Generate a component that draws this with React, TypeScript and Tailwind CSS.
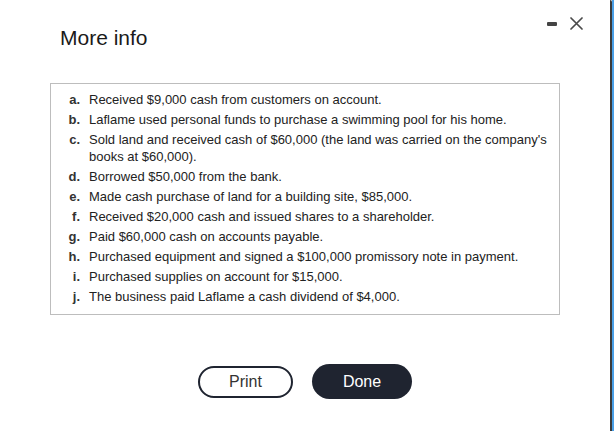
const items: { letter: string; text: string }[] = [
  { letter: "a.", text: "Received $9,000 cash from customers on account." },
  { letter: "b.", text: "Laflame used personal funds to purchase a swimming pool for his home." },
  { letter: "c.", text: "Sold land and received cash of $60,000 (the land was carried on the company's books at $60,000)." },
  { letter: "d.", text: "Borrowed $50,000 from the bank." },
  { letter: "e.", text: "Made cash purchase of land for a building site, $85,000." },
  { letter: "f.", text: "Received $20,000 cash and issued shares to a shareholder." },
  { letter: "g.", text: "Paid $60,000 cash on accounts payable." },
  { letter: "h.", text: "Purchased equipment and signed a $100,000 promissory note in payment." },
  { letter: "i.", text: "Purchased supplies on account for $15,000." },
  { letter: "j.", text: "The business paid Laflame a cash dividend of $4,000." },
];

export default function App() {
  return (
    <div
      className="w-[616px] h-[431px] bg-white flex overflow-hidden"
      style={{ fontFamily: "'Liberation Sans', Arial, sans-serif" }}
    >
      <div className="w-[610px] flex flex-col">
        <div className="flex h-[50px]">
          <h1 className="pl-[60px] pt-[26px] text-[21px] leading-[24px] text-[#1a1a1a] font-normal">More info</h1>
          <div className="ml-auto flex items-start pt-[17px] pr-[27px] gap-[13px]">
            <span className="mt-[5px] w-[10px] h-[3.5px] bg-[#444] rounded-[1px]" />
            {/* close glyph */}
            <svg width="13" height="13" viewBox="0 0 13 13" className="text-[#4a4a4a]">
              <path d="M1 1 L12 12 M12 1 L1 12" stroke="currentColor" strokeWidth="1.7" strokeLinecap="round" />
            </svg>
          </div>
        </div>

        <div className="ml-[50px] mt-[33px] w-[510px] border border-[#bdbdbd] pt-[7px] pb-[9px] pl-[5px] pr-[4px] flex flex-col gap-[3px]">
          {items.map((it) => (
            <div key={it.letter} className="flex text-[13px] leading-[17px]">
              <span className="w-[24px] shrink-0 text-right font-bold text-[#333]">{it.letter}</span>
              <span className="ml-[9px] text-[#222]">{it.text}</span>
            </div>
          ))}
        </div>

        <div className="mt-[49px] flex items-center justify-center gap-[19px]">
          <button className="w-[95px] h-[32px] rounded-full border-2 border-[#1f2430] bg-white text-[16px] text-[#333]">
            Print
          </button>
          <button className="w-[100px] h-[35px] rounded-full bg-[#1f2430] text-[16px] text-white">
            Done
          </button>
        </div>
      </div>
      <div className="w-[2px] bg-[#3a3a3a] rounded-tr-[4px]" />
      <div className="w-[2px] bg-[#4a9fe6]" />
      <div className="w-[2px] bg-white" />
    </div>
  );
}
